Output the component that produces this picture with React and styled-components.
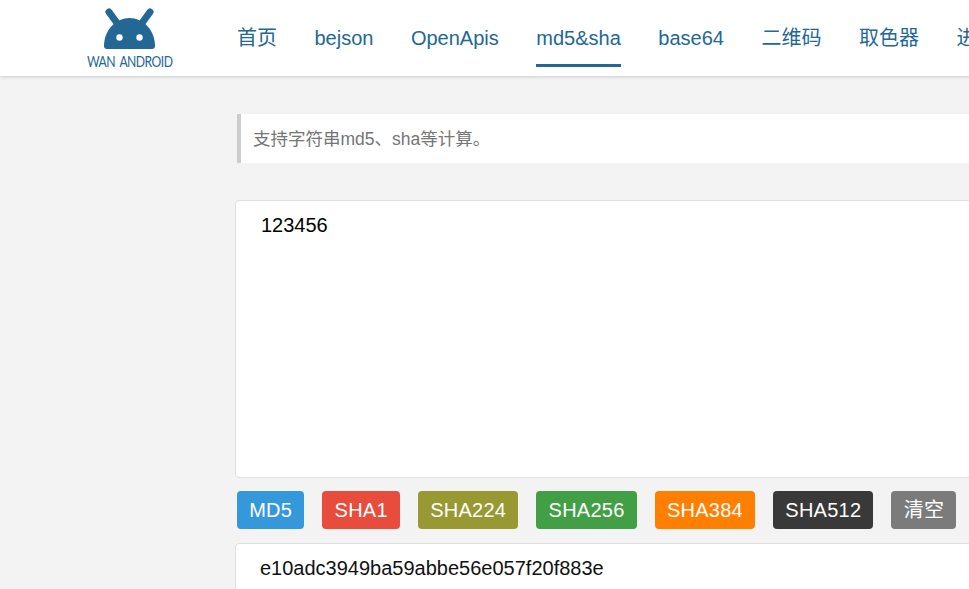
import React from "react";
import styled, { createGlobalStyle } from "styled-components";

const Global = createGlobalStyle`
  html, body { margin: 0; padding: 0; height: 100%; overflow: hidden; background: #f3f3f3; }
  body { font-family: "Liberation Sans", Arial, "Noto Sans CJK SC", sans-serif; }
`;
const Page = styled.div`width: 1300px; height: 589px; overflow: hidden; background: #f3f3f3;`;
const Header = styled.header`
  height: 76px; background: #fff; box-shadow: 0 1px 3px rgba(0,0,0,.16);
  display: flex; padding-left: 87px; box-sizing: border-box;
`;
const LogoBox = styled.div`width: 150px; flex: none; height: 76px;`;
const Nav = styled.nav`display: flex; gap: 37.5px; height: 76px; white-space: nowrap;`;
const NavLink = styled.a`
  display: block; box-sizing: border-box; height: 67px; padding-top: 23px; line-height: 30px;
  font-size: 20px; color: #236795;
  border-bottom: 3px solid ${p => (p.$active ? "#236795" : "transparent")};
`;
const Main = styled.main`padding: 38px 0 0 235px; display: flex; flex-direction: column;`;
const Note = styled.blockquote`
  margin: 0 0 37px 2px; height: 49px; box-sizing: border-box; background: #fff;
  border-left: 4px solid #ccc; padding-left: 12px; line-height: 50px; font-size: 17.5px; color: #757575;
`;
const Panel = styled.div`
  background: #fff; border: 1px solid #e0e0e0; border-radius: 4px; box-sizing: border-box;
  color: ${p => p.$color}; font-size: 20px; line-height: 30px;
  height: ${p => p.$height}px; padding: 9px 0 0 ${p => p.$pad}px;
`;
const Buttons = styled.div`display: flex; gap: 18px; margin: 13px 0 14px 2px;`;
const Btn = styled.button`
  height: 38px; padding: 0 12.2px; border: 0; border-radius: 4px; background: ${p => p.$bg};
  color: #fff; letter-spacing: .25px;
  font: 20px/38px "Liberation Sans", Arial, "Noto Sans CJK SC", sans-serif;
`;

const Logo = () => (
  <svg width="88" height="76" viewBox="87 0 88 76" aria-label="Wan Android">
    <g fill="#236795">
      <path d="M109 12 L117 23" stroke="#236795" strokeWidth="7" strokeLinecap="round" />
      <path d="M150 12 L142 23" stroke="#236795" strokeWidth="7" strokeLinecap="round" />
      <path d="M104 46 C104 30 116 18 129.5 18 C143 18 155 30 155 46 Q155 49 152 49 L107 49 Q104 49 104 46 Z" />
      <circle cx="119.5" cy="37.5" r="3.2" fill="#fff" />
      <circle cx="139.5" cy="37.5" r="3.2" fill="#fff" />
    </g>
    <text transform="translate(87 66.5) scale(.76 1)" textLength="113" lengthAdjust="spacing" fontFamily="Lato, sans-serif" fontWeight="400" fontSize="16" wordSpacing="3" fill="#236795">WAN ANDROID</text>
  </svg>
);

const links = ["首页", "bejson", "OpenApis", "md5&sha", "base64", "二维码", "取色器", "进制转换"];
const btns = [["MD5", "#3498db"], ["SHA1", "#e74c3c"], ["SHA224", "#999933"], ["SHA256", "#429f46"], ["SHA384", "#ff8000"], ["SHA512", "#393939"], ["清空", "#7b7b7b"]];

export default function App() {
  return (
    <Page>
      <Global />
      <Header>
        <LogoBox><Logo /></LogoBox>
        <Nav>{links.map(l => <NavLink key={l} $active={l === "md5&sha"}>{l}</NavLink>)}</Nav>
      </Header>
      <Main>
        <Note>支持字符串md5、sha等计算。</Note>
        <Panel $height={278} $pad={25} $color="#000">123456</Panel>
        <Buttons>{btns.map(([t, c]) => <Btn key={t} $bg={c}>{t}</Btn>)}</Buttons>
        <Panel $height={120} $pad={24} $color="#111">e10adc3949ba59abbe56e057f20f883e</Panel>
      </Main>
    </Page>
  );
}
